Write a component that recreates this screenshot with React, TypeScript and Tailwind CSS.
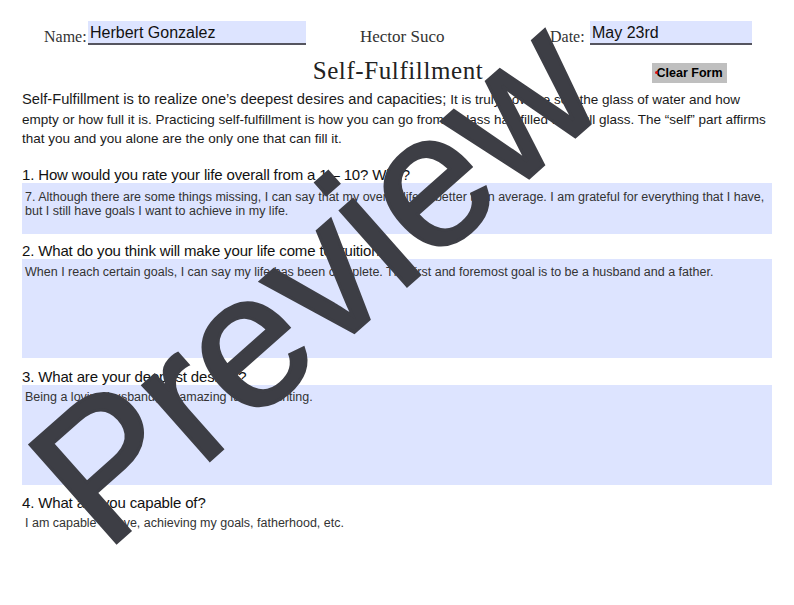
const questions = [
  {
    label: '1. How would you rate your life overall from a 1 – 10? Why?',
    answer:
      '7. Although there are some things missing, I can say that my overall life is better than average. I am grateful for everything that I have, but I still have goals I want to achieve in my life.',
    box: 'h-[51px] pt-[7px] bg-[#dde4ff]',
    gap: 'mt-[18px]',
  },
  {
    label: '2. What do you think will make your life come to fruition?',
    answer:
      'When I reach certain goals, I can say my life has been complete. The first and foremost goal is to be a husband and a father.',
    box: 'h-[99px] pt-[6px] bg-[#dde4ff]',
    gap: 'mt-[9.5px]',
  },
  {
    label: '3. What are your deepest desires?',
    answer: 'Being a loving husband, an amazing father, hunting.',
    box: 'h-[100px] pt-[5px] bg-[#dde4ff]',
    gap: 'mt-[10.5px]',
  },
  {
    label: '4. What are you capable of?',
    answer: 'I am capable of love, achieving my goals, fatherhood, etc.',
    box: 'h-[60px] pt-[4.5px] bg-white',
    gap: 'mt-[10.5px]',
  },
];

export default function App() {
  return (
    <div className="relative h-[605px] w-[794px] overflow-hidden bg-white font-['Liberation_Sans',Arial,sans-serif] text-[#111]">
      {/* header fields */}
      <div className="flex h-[45px] items-end">
        <span className="w-[88px] pl-[44px] font-['Liberation_Serif',serif] text-[16px] leading-none text-[#333]">
          Name:
        </span>
        <div className="h-[24px] w-[218px] border-b-2 border-[#55555f] bg-[#dde4ff] pl-[2px] pt-[2px] text-[16px] leading-[20px] text-[#111]">
          Herbert Gonzalez
        </div>
        <span className="w-[244px] pl-[54px] font-['Liberation_Serif',serif] text-[17px] leading-none text-[#333]">
          Hector Suco
        </span>
        <span className="w-[40px] font-['Liberation_Serif',serif] text-[16px] leading-none text-[#333]">Date:</span>
        <div className="h-[24px] w-[162px] border-b-2 border-[#55555f] bg-[#dde4ff] pl-[2px] pt-[2px] text-[16px] leading-[20px] text-[#111]">
          May 23rd
        </div>
      </div>

      {/* title + clear button */}
      <div className="flex h-[45px] items-start">
        <div className="ml-[298px] mt-[13px] w-[200px] text-center font-['Liberation_Serif',serif] text-[25px] leading-none tracking-[0.6px] text-[#222]">
          Self-Fulfillment
        </div>
        <button
          type="button"
          className="relative ml-[154px] mt-[18px] flex h-[20px] w-[75px] items-center justify-center bg-[#bfbfbf] text-[12.5px] font-bold text-black"
        >
          <span className="absolute left-[3px] top-[8px] h-[3px] w-[3px] rounded-full bg-[#e01010]" />
          Clear Form
        </button>
      </div>

      <p className="ml-[22px] w-[752px] text-[14.7px] leading-[18.5px] text-[#1a1a1a]">
        Self-Fulfillment is to realize one’s deepest desires and capacities;{' '}
        <span className="text-[13.5px]">
          It is truly how we see the glass of water and how empty or how full it is. Practicing self-fulfillment is how
          you can go from a glass half-filled to a full glass. The “self” part affirms that you and you alone are the
          only one that can fill it.
        </span>
      </p>

      <div className="px-[22px]">
        {questions.map((q) => (
          <div key={q.label} className={q.gap}>
            <div className="text-[15px] leading-[16px] tracking-[-0.15px] text-[#111]">{q.label}</div>
            <div className={`${q.box} pl-[3px] pr-[4px] text-[12.5px] leading-[14px] text-[#333]`}>{q.answer}</div>
          </div>
        ))}
      </div>

      {/* watermark */}
      <div className="pointer-events-none absolute left-[105px] top-[392px] origin-[0_161px] rotate-[-41.5deg] whitespace-nowrap text-[190px] leading-none text-[#3d3e45] [-webkit-text-stroke:3px_#3d3e45]">
        Preview
      </div>
    </div>
  );
}
